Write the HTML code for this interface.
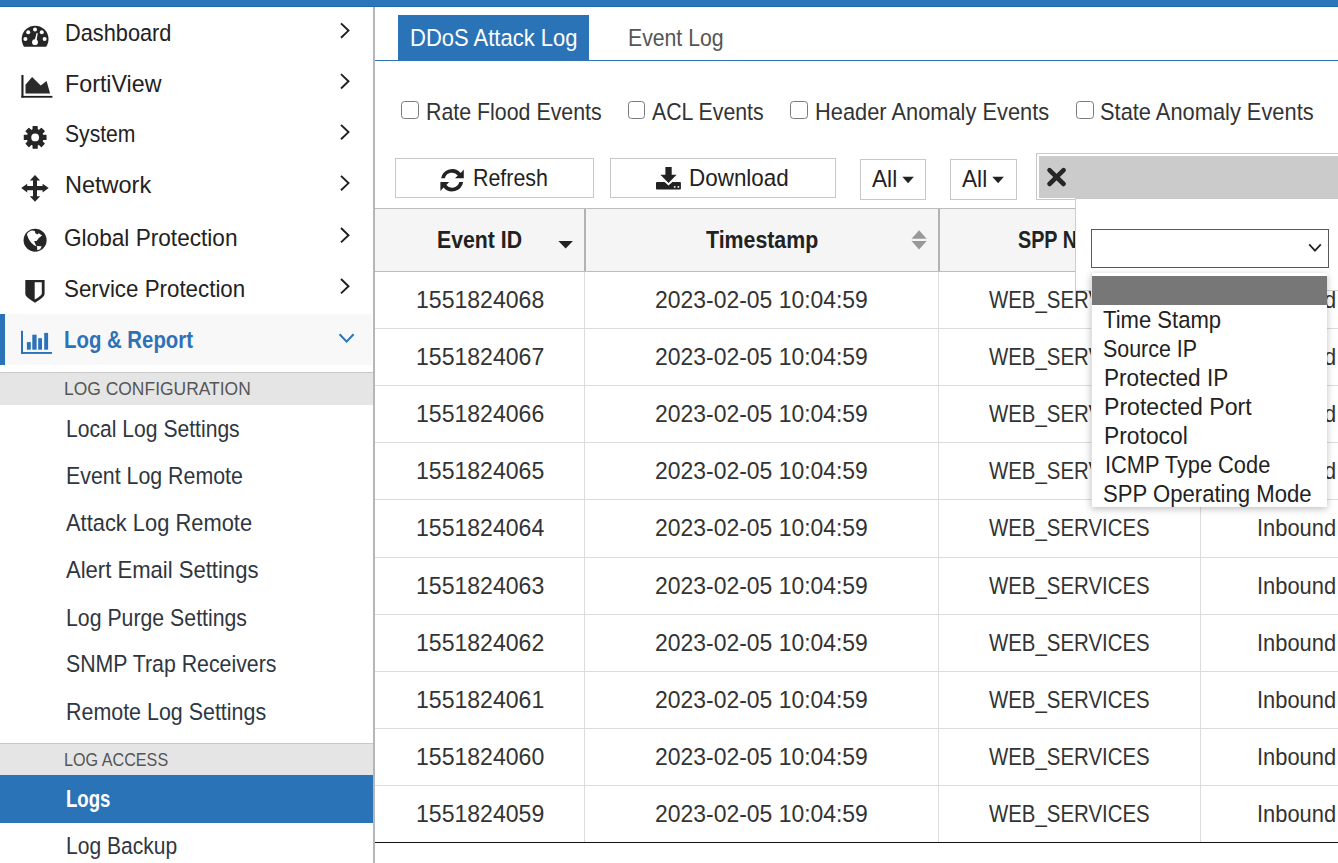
<!DOCTYPE html>
<html><head><meta charset="utf-8">
<style>
html,body{margin:0;padding:0;}
body{width:1338px;height:863px;overflow:hidden;position:relative;background:#fff;font-family:"Liberation Sans",sans-serif;}
.a{position:absolute;box-sizing:border-box;}
.t{position:absolute;white-space:nowrap;line-height:0;transform-origin:0 0;}
svg{position:absolute;overflow:visible;}
</style></head><body>
<!-- top bar -->
<div class="a" style="left:0;top:0;width:1338px;height:7px;background:#2b76b9;"></div>
<div class="a" style="left:0;top:6px;width:1338px;height:1px;background:#1f69b1;"></div>
<!-- sidebar -->
<div class="a" style="left:373px;top:7px;width:2px;height:856px;background:#b6b6b6;"></div>
<div class="a" style="left:0;top:314px;width:372px;height:51px;background:#f8f8f8;"></div>
<div class="a" style="left:0;top:314px;width:5px;height:51px;background:#2b73b7;"></div>
<div class="a" style="left:0;top:372px;width:373px;height:33px;background:#e5e5e5;border-top:1px solid #c9c9c9;"></div>
<div class="a" style="left:0;top:743px;width:373px;height:32px;background:#e5e5e5;border-top:1px solid #c9c9c9;"></div>
<div class="a" style="left:0;top:775px;width:373px;height:48px;background:#2b73b7;"></div>

<!-- sidebar icons -->
<svg style="left:0;top:0" width="60" height="360" viewBox="0 0 60 360">
 <!-- dashboard gauge -->
 <path d="M24.1 46.75 A13.4 13.4 0 1 1 46.1 46.75 Z" fill="#262626"/>
 <g fill="#fff">
  <circle cx="35" cy="29.6" r="2"/><circle cx="28.2" cy="32.3" r="2"/><circle cx="41.8" cy="32.3" r="2"/>
  <circle cx="25.4" cy="39" r="2"/><circle cx="44.6" cy="39" r="2"/><circle cx="35" cy="42.2" r="2.9"/>
  <path d="M34.2 42 L36.6 33 L37.8 33.3 L36.2 42.4 Z"/>
 </g>
 <!-- fortiview area chart -->
 <rect x="21.4" y="75" width="2.1" height="22.6" fill="#1e1e1e"/>
 <rect x="21.4" y="95.9" width="31" height="1.8" fill="#1e1e1e"/>
 <path d="M25.5 84.8 L32.1 77 L40.7 85.4 L46.6 81 L50.1 93.5 L25.5 93.5 Z" fill="#2a2a2a"/>
 <!-- gear -->
 <g transform="translate(35.15 137.45)" fill="#262626">
  <circle r="8.4"/><rect x="-2.6" y="-11.4" width="5.2" height="6" rx="0.6" transform="rotate(0)"/><rect x="-2.6" y="-11.4" width="5.2" height="6" rx="0.6" transform="rotate(45)"/><rect x="-2.6" y="-11.4" width="5.2" height="6" rx="0.6" transform="rotate(90)"/><rect x="-2.6" y="-11.4" width="5.2" height="6" rx="0.6" transform="rotate(135)"/><rect x="-2.6" y="-11.4" width="5.2" height="6" rx="0.6" transform="rotate(180)"/><rect x="-2.6" y="-11.4" width="5.2" height="6" rx="0.6" transform="rotate(225)"/><rect x="-2.6" y="-11.4" width="5.2" height="6" rx="0.6" transform="rotate(270)"/><rect x="-2.6" y="-11.4" width="5.2" height="6" rx="0.6" transform="rotate(315)"/>
  <circle r="3.9" fill="#fff"/>
 </g>
 <!-- network arrows -->
 <path d="M35 175 L40.2 180.4 L37 180.4 L37 186 L42.6 186 L42.6 183.8 L48.7 188.1 L42.6 192.6 L42.6 190.2 L37 190.2 L37 196.3 L40.2 196.3 L35 201.7 L29.8 196.3 L33 196.3 L33 190.2 L27.2 190.2 L27.2 192.6 L21.2 188.1 L27.2 183.8 L27.2 186 L33 186 L33 180.4 L29.8 180.4 Z" fill="#262626"/>
 <!-- globe -->
 <circle cx="35.1" cy="240.2" r="11.5" fill="#262626"/>
 <path d="M26.9 234.6 Q27.6 232.4 29.1 231.7 Q31 230.6 32.3 230.6 L34.8 231 L35.4 233.3 L37.3 234.4 L38.8 233.3 L42.1 235.5 L38.8 238.1 L36.6 241 L34.2 241 L35 243.3 L36.6 246.6 Q33 244.8 31 242.5 Q28.2 239.2 26.9 234.6 Z" fill="#fff"/>
 <path d="M37 245.9 L41.7 246.2 L40.2 249.2 L37.3 250.2 Z" fill="#fff"/>
 <!-- shield -->
 <path d="M25.3 279.9 L44.6 279.9 L44.6 294.1 Q44.6 297 35 302.8 Q25.3 297 25.3 294.1 Z" fill="#262626"/>
 <path d="M34.7 282.3 L41.8 282.3 L41.8 293.5 Q41.8 295.6 34.7 299.6 Z" fill="#fff"/>
 <!-- log & report bars -->
 <g fill="#2c72b8">
  <rect x="21" y="330.8" width="2" height="23"/>
  <rect x="21" y="352" width="31" height="1.9"/>
  <rect x="26.9" y="342.1" width="3.9" height="7.6"/>
  <rect x="32.3" y="334.7" width="4.3" height="15"/>
  <rect x="38.2" y="338.2" width="3.8" height="11.5"/>
  <rect x="44.2" y="332.9" width="3.9" height="16.8"/>
 </g>
</svg>
<!-- chevrons -->
<svg style="left:0;top:0" width="375" height="360" viewBox="0 0 375 360">
 <g fill="none" stroke="#1e1e1e" stroke-width="1.9" stroke-linecap="butt" stroke-linejoin="miter">
  <path d="M341 23.4 L348.5 30.6 L341 37.8"/>
  <path d="M341 74.1 L348.5 81.3 L341 88.5"/>
  <path d="M341 124.9 L348.5 132.1 L341 139.3"/>
  <path d="M341 175.9 L348.5 183.1 L341 190.3"/>
  <path d="M341 228 L348.5 235.2 L341 242.4"/>
  <path d="M341 279 L348.5 286.2 L341 293.4"/>
 </g>
 <path d="M339.6 334.3 L346.6 341.6 L353.6 334.3" fill="none" stroke="#2c72b8" stroke-width="2"/>
</svg>

<!-- tabs -->
<div class="a" style="left:398px;top:15px;width:191px;height:45px;background:#2b73b7;"></div>
<div class="a" style="left:375px;top:60px;width:963px;height:1px;background:#2d74b8;"></div>

<!-- checkboxes -->
<div class="a" style="left:401.3px;top:101px;width:17.6px;height:17.6px;border:1.3px solid #7a7a7a;border-radius:3.5px;"></div>
<div class="a" style="left:627.6px;top:101px;width:17.6px;height:17.6px;border:1.3px solid #7a7a7a;border-radius:3.5px;"></div>
<div class="a" style="left:790.4px;top:101px;width:17.6px;height:17.6px;border:1.3px solid #7a7a7a;border-radius:3.5px;"></div>
<div class="a" style="left:1076.4px;top:101px;width:17.6px;height:17.6px;border:1.3px solid #7a7a7a;border-radius:3.5px;"></div>
<!-- buttons -->
<div class="a" style="left:395px;top:158px;width:199px;height:40px;border:1px solid #c8c8c8;"></div>
<div class="a" style="left:610px;top:158px;width:226px;height:40px;border:1px solid #c8c8c8;"></div>
<div class="a" style="left:860px;top:159px;width:66px;height:41px;border:1px solid #c8c8c8;"></div>
<div class="a" style="left:950px;top:159px;width:67px;height:41px;border:1px solid #c8c8c8;"></div>
<div class="a" style="left:1036px;top:153px;width:310px;height:47px;border:1px solid #c8c8c8;"></div>
<div class="a" style="left:1039px;top:156px;width:310px;height:42px;background:#cbcbcb;"></div>
<svg style="left:0;top:0" width="1338" height="260" viewBox="0 0 1338 260">
 <!-- refresh -->
 <g fill="#222">
  <path d="M441.06 178.3 A11.2 11.2 0 0 1 460.68 173 L463.8 169.5 L463.8 178.3 L455 178.3 L457.85 175.38 A7.5 7.5 0 0 0 444.84 178.3 Z"/>
  <path d="M463.14 182.1 A11.2 11.2 0 0 1 443.52 187.4 L440.4 190.9 L440.4 182.1 L449.2 182.1 L446.35 185.02 A7.5 7.5 0 0 0 459.36 182.1 Z"/>
 </g>
 <!-- download -->
 <g fill="#222">
  <path d="M665.4 166.9 L671.7 166.9 L671.7 174.8 L676.5 174.8 L668.5 183 L660.4 174.8 L665.4 174.8 Z"/>
  <path d="M656 183.1 Q656 182.1 657 182.1 L664.6 182.1 L668.5 185.4 L672.4 182.1 L680 182.1 Q680.9 182.1 680.9 183.1 L680.9 188.6 Q680.9 189.6 680 189.6 L657 189.6 Q656 189.6 656 188.6 Z"/>
  <rect x="673.9" y="186.1" width="1.6" height="1.6" fill="#fff"/>
  <rect x="677.6" y="186.1" width="1.6" height="1.6" fill="#fff"/>
 </g>
 <!-- All carets -->
 <path d="M902.3 176.8 L913.9 176.8 L908.1 183.3 Z" fill="#222"/>
 <path d="M992.3 176.8 L1003.9 176.8 L998.1 183.3 Z" fill="#222"/>
 <!-- X -->
 <path d="M1049.5 170.2 L1063.6 184" stroke="#262626" stroke-width="4.6" stroke-linecap="round"/>
 <path d="M1063.6 170.2 L1049.5 184" stroke="#262626" stroke-width="4.6" stroke-linecap="round"/>
</svg>

<!-- table -->
<div class="a" style="left:375px;top:208px;width:963px;height:64px;background:#f5f5f5;border-top:1px solid #bdbdbd;border-bottom:1px solid #bdbdbd;"></div>
<div class="a" style="left:584px;top:209px;width:2px;height:62px;background:#b3b3b3;"></div>
<div class="a" style="left:938px;top:209px;width:2px;height:62px;background:#b3b3b3;"></div>
<div class="a" style="left:1200px;top:209px;width:2px;height:62px;background:#b3b3b3;"></div>
<div id="rows"></div>
<div class="a" style="left:375px;top:328px;width:963px;height:1px;background:#dcdcdc;"></div>
<div class="a" style="left:375px;top:385px;width:963px;height:1px;background:#dcdcdc;"></div>
<div class="a" style="left:375px;top:442px;width:963px;height:1px;background:#dcdcdc;"></div>
<div class="a" style="left:375px;top:499px;width:963px;height:1px;background:#dcdcdc;"></div>
<div class="a" style="left:375px;top:557px;width:963px;height:1px;background:#dcdcdc;"></div>
<div class="a" style="left:375px;top:614px;width:963px;height:1px;background:#dcdcdc;"></div>
<div class="a" style="left:375px;top:671px;width:963px;height:1px;background:#dcdcdc;"></div>
<div class="a" style="left:375px;top:728px;width:963px;height:1px;background:#dcdcdc;"></div>
<div class="a" style="left:375px;top:785px;width:963px;height:1px;background:#dcdcdc;"></div>
<div class="a" style="left:584px;top:272px;width:1px;height:570px;background:#dcdcdc;"></div>
<div class="a" style="left:938px;top:272px;width:1px;height:570px;background:#dcdcdc;"></div>
<div class="a" style="left:1200px;top:272px;width:1px;height:570px;background:#dcdcdc;"></div>
<div class="a" style="left:375px;top:842px;width:963px;height:1px;background:#111;"></div>

<div class="t" style="left:65.40px;top:32.93px;font-size:23.84px;color:#222;transform:scaleX(0.9134);">Dashboard</div>
<div class="t" style="left:65.00px;top:83.53px;font-size:23.84px;color:#222;transform:scaleX(0.9758);">FortiView</div>
<div class="t" style="left:65.00px;top:134.33px;font-size:23.84px;color:#222;transform:scaleX(0.8868);">System</div>
<div class="t" style="left:65.00px;top:185.33px;font-size:23.84px;color:#222;transform:scaleX(0.9863);">Network</div>
<div class="t" style="left:64.40px;top:237.53px;font-size:23.84px;color:#222;transform:scaleX(0.9492);">Global Protection</div>
<div class="t" style="left:64.40px;top:288.53px;font-size:23.84px;color:#222;transform:scaleX(0.9370);">Service Protection</div>
<div class="t" style="left:64.40px;top:339.53px;font-size:23.84px;color:#2d72b6;font-weight:bold;transform:scaleX(0.8550);">Log & Report</div>
<div class="t" style="left:64.40px;top:389.10px;font-size:17.88px;color:#555;transform:scaleX(0.9770);">LOG CONFIGURATION</div>
<div class="t" style="left:64.30px;top:760.20px;font-size:17.88px;color:#555;transform:scaleX(0.9046);">LOG ACCESS</div>
<div class="t" style="left:65.80px;top:429.33px;font-size:23.84px;color:#2f3640;transform:scaleX(0.8858);">Local Log Settings</div>
<div class="t" style="left:65.80px;top:476.43px;font-size:23.84px;color:#2f3640;transform:scaleX(0.8962);">Event Log Remote</div>
<div class="t" style="left:65.50px;top:523.43px;font-size:23.84px;color:#2f3640;transform:scaleX(0.9181);">Attack Log Remote</div>
<div class="t" style="left:65.50px;top:570.23px;font-size:23.84px;color:#2f3640;transform:scaleX(0.9255);">Alert Email Settings</div>
<div class="t" style="left:65.80px;top:618.03px;font-size:23.84px;color:#2f3640;transform:scaleX(0.8930);">Log Purge Settings</div>
<div class="t" style="left:65.80px;top:664.33px;font-size:23.84px;color:#2f3640;transform:scaleX(0.8946);">SNMP Trap Receivers</div>
<div class="t" style="left:65.80px;top:711.83px;font-size:23.84px;color:#2f3640;transform:scaleX(0.8994);">Remote Log Settings</div>
<div class="t" style="left:65.80px;top:846.33px;font-size:23.84px;color:#2f3640;transform:scaleX(0.8832);">Log Backup</div>
<div class="t" style="left:65.80px;top:799.33px;font-size:23.84px;color:#fff;font-weight:bold;transform:scaleX(0.7803);">Logs</div>
<div class="t" style="left:410.10px;top:38.13px;font-size:24.71px;color:#fff;transform:scaleX(0.8905);">DDoS Attack Log</div>
<div class="t" style="left:628.00px;top:38.23px;font-size:24.71px;color:#555;transform:scaleX(0.8589);">Event Log</div>
<div class="t" style="left:425.90px;top:111.63px;font-size:23.84px;color:#333;transform:scaleX(0.8965);">Rate Flood Events</div>
<div class="t" style="left:652.00px;top:111.63px;font-size:23.84px;color:#333;transform:scaleX(0.8936);">ACL Events</div>
<div class="t" style="left:815.00px;top:111.63px;font-size:23.84px;color:#333;transform:scaleX(0.9159);">Header Anomaly Events</div>
<div class="t" style="left:1099.80px;top:111.63px;font-size:23.84px;color:#333;transform:scaleX(0.9164);">State Anomaly Events</div>
<div class="t" style="left:472.70px;top:177.93px;font-size:23.84px;color:#222;transform:scaleX(0.8970);">Refresh</div>
<div class="t" style="left:689.20px;top:177.93px;font-size:23.84px;color:#222;transform:scaleX(0.9415);">Download</div>
<div class="t" style="left:872.40px;top:178.73px;font-size:23.84px;color:#222;transform:scaleX(0.9509);">All</div>
<div class="t" style="left:962.40px;top:178.73px;font-size:23.84px;color:#222;transform:scaleX(0.9509);">All</div>
<div class="t" style="left:437.30px;top:239.84px;font-size:23.55px;color:#222;font-weight:bold;transform:scaleX(0.9023);">Event ID</div>
<div class="t" style="left:706.00px;top:239.84px;font-size:23.55px;color:#222;font-weight:bold;transform:scaleX(0.9056);">Timestamp</div>
<div class="t" style="left:1017.80px;top:239.84px;font-size:23.55px;color:#222;font-weight:bold;transform:scaleX(0.8390);">SPP Name</div>
<div class="t" style="left:415.80px;top:299.73px;font-size:23.84px;color:#333;transform:scaleX(0.9676);">1551824068</div>
<div class="t" style="left:655.00px;top:299.73px;font-size:23.84px;color:#333;transform:scaleX(0.9621);">2023-02-05 10:04:59</div>
<div class="t" style="left:988.80px;top:299.73px;font-size:23.84px;color:#333;transform:scaleX(0.8562);">WEB_SERVICES</div>
<div class="t" style="left:1256.80px;top:299.73px;font-size:23.84px;color:#333;transform:scaleX(0.9188);">Inbound</div>
<div class="t" style="left:415.80px;top:356.73px;font-size:23.84px;color:#333;transform:scaleX(0.9676);">1551824067</div>
<div class="t" style="left:655.00px;top:356.73px;font-size:23.84px;color:#333;transform:scaleX(0.9621);">2023-02-05 10:04:59</div>
<div class="t" style="left:988.80px;top:356.73px;font-size:23.84px;color:#333;transform:scaleX(0.8562);">WEB_SERVICES</div>
<div class="t" style="left:1256.80px;top:356.73px;font-size:23.84px;color:#333;transform:scaleX(0.9188);">Inbound</div>
<div class="t" style="left:415.80px;top:413.73px;font-size:23.84px;color:#333;transform:scaleX(0.9676);">1551824066</div>
<div class="t" style="left:655.00px;top:413.73px;font-size:23.84px;color:#333;transform:scaleX(0.9621);">2023-02-05 10:04:59</div>
<div class="t" style="left:988.80px;top:413.73px;font-size:23.84px;color:#333;transform:scaleX(0.8562);">WEB_SERVICES</div>
<div class="t" style="left:1256.80px;top:413.73px;font-size:23.84px;color:#333;transform:scaleX(0.9188);">Inbound</div>
<div class="t" style="left:415.80px;top:470.73px;font-size:23.84px;color:#333;transform:scaleX(0.9676);">1551824065</div>
<div class="t" style="left:655.00px;top:470.73px;font-size:23.84px;color:#333;transform:scaleX(0.9621);">2023-02-05 10:04:59</div>
<div class="t" style="left:988.80px;top:470.73px;font-size:23.84px;color:#333;transform:scaleX(0.8562);">WEB_SERVICES</div>
<div class="t" style="left:1256.80px;top:470.73px;font-size:23.84px;color:#333;transform:scaleX(0.9188);">Inbound</div>
<div class="t" style="left:415.80px;top:527.73px;font-size:23.84px;color:#333;transform:scaleX(0.9676);">1551824064</div>
<div class="t" style="left:655.00px;top:527.73px;font-size:23.84px;color:#333;transform:scaleX(0.9621);">2023-02-05 10:04:59</div>
<div class="t" style="left:988.80px;top:527.73px;font-size:23.84px;color:#333;transform:scaleX(0.8562);">WEB_SERVICES</div>
<div class="t" style="left:1256.80px;top:527.73px;font-size:23.84px;color:#333;transform:scaleX(0.9188);">Inbound</div>
<div class="t" style="left:415.80px;top:585.73px;font-size:23.84px;color:#333;transform:scaleX(0.9676);">1551824063</div>
<div class="t" style="left:655.00px;top:585.73px;font-size:23.84px;color:#333;transform:scaleX(0.9621);">2023-02-05 10:04:59</div>
<div class="t" style="left:988.80px;top:585.73px;font-size:23.84px;color:#333;transform:scaleX(0.8562);">WEB_SERVICES</div>
<div class="t" style="left:1256.80px;top:585.73px;font-size:23.84px;color:#333;transform:scaleX(0.9188);">Inbound</div>
<div class="t" style="left:415.80px;top:642.73px;font-size:23.84px;color:#333;transform:scaleX(0.9676);">1551824062</div>
<div class="t" style="left:655.00px;top:642.73px;font-size:23.84px;color:#333;transform:scaleX(0.9621);">2023-02-05 10:04:59</div>
<div class="t" style="left:988.80px;top:642.73px;font-size:23.84px;color:#333;transform:scaleX(0.8562);">WEB_SERVICES</div>
<div class="t" style="left:1256.80px;top:642.73px;font-size:23.84px;color:#333;transform:scaleX(0.9188);">Inbound</div>
<div class="t" style="left:415.80px;top:699.73px;font-size:23.84px;color:#333;transform:scaleX(0.9676);">1551824061</div>
<div class="t" style="left:655.00px;top:699.73px;font-size:23.84px;color:#333;transform:scaleX(0.9621);">2023-02-05 10:04:59</div>
<div class="t" style="left:988.80px;top:699.73px;font-size:23.84px;color:#333;transform:scaleX(0.8562);">WEB_SERVICES</div>
<div class="t" style="left:1256.80px;top:699.73px;font-size:23.84px;color:#333;transform:scaleX(0.9188);">Inbound</div>
<div class="t" style="left:415.80px;top:756.73px;font-size:23.84px;color:#333;transform:scaleX(0.9676);">1551824060</div>
<div class="t" style="left:655.00px;top:756.73px;font-size:23.84px;color:#333;transform:scaleX(0.9621);">2023-02-05 10:04:59</div>
<div class="t" style="left:988.80px;top:756.73px;font-size:23.84px;color:#333;transform:scaleX(0.8562);">WEB_SERVICES</div>
<div class="t" style="left:1256.80px;top:756.73px;font-size:23.84px;color:#333;transform:scaleX(0.9188);">Inbound</div>
<div class="t" style="left:415.80px;top:813.73px;font-size:23.84px;color:#333;transform:scaleX(0.9676);">1551824059</div>
<div class="t" style="left:655.00px;top:813.73px;font-size:23.84px;color:#333;transform:scaleX(0.9621);">2023-02-05 10:04:59</div>
<div class="t" style="left:988.80px;top:813.73px;font-size:23.84px;color:#333;transform:scaleX(0.8562);">WEB_SERVICES</div>
<div class="t" style="left:1256.80px;top:813.73px;font-size:23.84px;color:#333;transform:scaleX(0.9188);">Inbound</div>
<svg style="left:0;top:0" width="1338" height="260" viewBox="0 0 1338 260">
 <!-- sort icons -->
 <path d="M558.4 241 L572.9 241 L565.65 248.6 Z" fill="#222"/>
 <path d="M911.5 238.8 L926.7 238.8 L919.1 230.2 Z" fill="#999"/>
 <path d="M911.5 241 L926.7 241 L919.1 249.4 Z" fill="#999"/>
</svg>


<!-- popup -->
<div class="a" style="left:1075px;top:198px;width:270px;height:93px;background:#fff;border-left:1px solid #cfcfcf;border-top:1px solid #c8c8c8;border-bottom:1px solid #d4d4d4;"></div>
<div class="a" style="left:1091px;top:229px;width:238px;height:39px;border:1px solid #595959;background:#fff;"></div>
<svg style="left:0;top:0" width="1338" height="260" viewBox="0 0 1338 260">
 <path d="M1309.2 244.4 L1315 250.6 L1320.8 244.4" fill="none" stroke="#262626" stroke-width="1.8"/>
</svg>
<div class="a" style="left:1091px;top:273px;width:236px;height:234px;background:#fff;box-shadow:0 2px 7px rgba(0,0,0,0.26);border-left:1px solid #e2e2e2;"></div>
<div class="a" style="left:1092px;top:276px;width:235px;height:29px;background:#777;"></div>
<div class="t" style="left:1103.00px;top:319.54px;font-size:23.55px;color:#222;transform:scaleX(0.9366);">Time Stamp</div>
<div class="t" style="left:1103.30px;top:348.54px;font-size:23.55px;color:#222;transform:scaleX(0.9091);">Source IP</div>
<div class="t" style="left:1103.90px;top:377.54px;font-size:23.55px;color:#222;transform:scaleX(0.9591);">Protected IP</div>
<div class="t" style="left:1103.90px;top:406.54px;font-size:23.55px;color:#222;transform:scaleX(0.9807);">Protected Port</div>
<div class="t" style="left:1104.20px;top:435.54px;font-size:23.55px;color:#222;transform:scaleX(0.9699);">Protocol</div>
<div class="t" style="left:1104.70px;top:464.54px;font-size:23.55px;color:#222;transform:scaleX(0.9261);">ICMP Type Code</div>
<div class="t" style="left:1103.30px;top:493.54px;font-size:23.55px;color:#222;transform:scaleX(0.9392);">SPP Operating Mode</div>
</body></html>
